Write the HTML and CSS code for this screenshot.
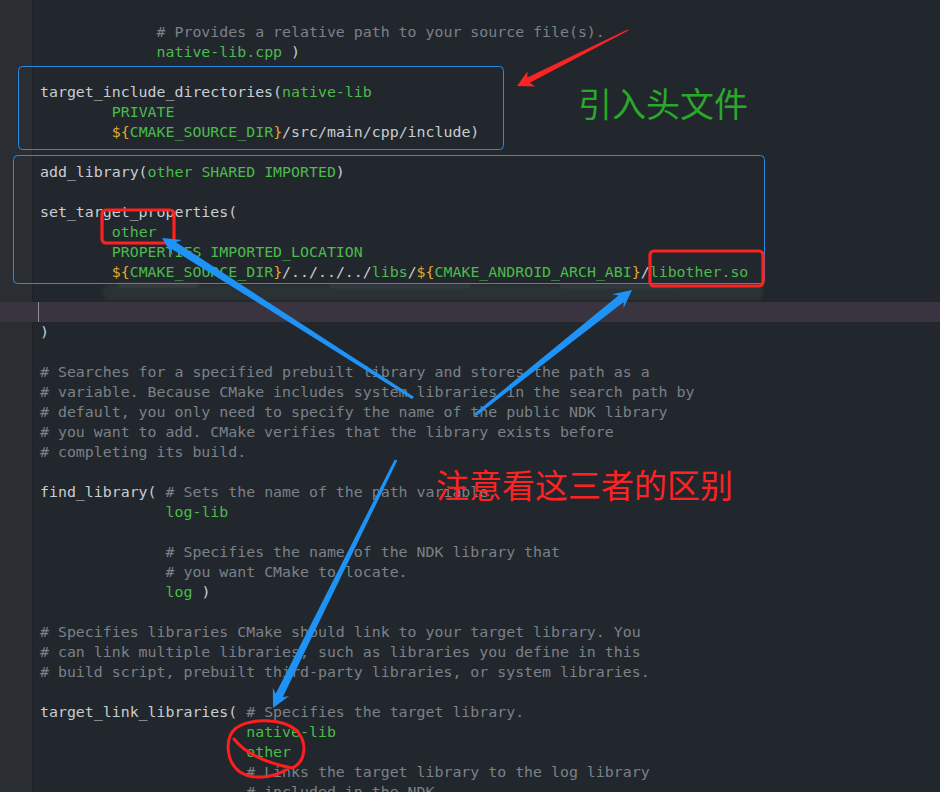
FILE: index.html
```html
<!DOCTYPE html>
<html lang="en">
<head>
  <meta charset="UTF-8">
  <title>CMakeLists.txt</title>
  <link rel="stylesheet" href="styles.css">
</head>
<body>
  <div class="editor">
    <div class="ln">             <span class="cm"># Provides a relative path to your source file(s).</span></div>
    <div class="ln">             <span class="g">native-lib.cpp</span> )</div>
    <div class="ln"> </div>
    <div class="ln">target_include_directories(<span class="g">native-lib</span></div>
    <div class="ln">        <span class="g">PRIVATE</span></div>
    <div class="ln">        <span class="y">${</span><span class="g">CMAKE_SOURCE_DIR</span><span class="y">}</span>/src/main/cpp/include)</div>
    <div class="ln"> </div>
    <div class="ln">add_library(<span class="g">other SHARED IMPORTED</span>)</div>
    <div class="ln"> </div>
    <div class="ln">set_target_properties(</div>
    <div class="ln">        <span class="g">other</span></div>
    <div class="ln">        <span class="g">PROPERTIES IMPORTED_LOCATION</span></div>
    <div class="ln">        <span class="y">${</span><span class="g">CMAKE_SOURCE_DIR</span><span class="y">}</span>/../../../<span class="g">libs</span>/<span class="y">${</span><span class="g">CMAKE_ANDROID_ARCH_ABI</span><span class="y">}</span>/<span class="g">libother.so</span></div>
    <div class="ln"> </div>
    <div class="ln current"><span class="caret"></span></div>
    <div class="ln">)</div>
    <div class="ln"> </div>
    <div class="ln cm"># Searches for a specified prebuilt library and stores the path as a</div>
    <div class="ln cm"># variable. Because CMake includes system libraries in the search path by</div>
    <div class="ln cm"># default, you only need to specify the name of the public NDK library</div>
    <div class="ln cm"># you want to add. CMake verifies that the library exists before</div>
    <div class="ln cm"># completing its build.</div>
    <div class="ln"> </div>
    <div class="ln">find_library( <span class="cm"># Sets the name of the path variable.</span></div>
    <div class="ln">              <span class="g">log-lib</span></div>
    <div class="ln"> </div>
    <div class="ln">              <span class="cm"># Specifies the name of the NDK library that</span></div>
    <div class="ln">              <span class="cm"># you want CMake to locate.</span></div>
    <div class="ln">              <span class="g">log</span> )</div>
    <div class="ln"> </div>
    <div class="ln cm"># Specifies libraries CMake should link to your target library. You</div>
    <div class="ln cm"># can link multiple libraries, such as libraries you define in this</div>
    <div class="ln cm"># build script, prebuilt third-party libraries, or system libraries.</div>
    <div class="ln"> </div>
    <div class="ln">target_link_libraries( <span class="cm"># Specifies the target library.</span></div>
    <div class="ln">                       <span class="g">native-lib</span></div>
    <div class="ln">                       <span class="g">other</span></div>
    <div class="ln">                       <span class="cm"># Links the target library to the log library</span></div>
    <div class="ln">                       <span class="cm"># included in the NDK.</span></div>
  </div>

  <!-- annotation layer drawn over the screenshot -->
  <svg class="marks" width="940" height="792" viewBox="0 0 940 792">
    <defs>
      <filter id="soft"><feGaussianBlur stdDeviation="1.5"/></filter>
    </defs>
    <g filter="url(#soft)" fill="#2c3135">
      <rect x="103" y="285" width="660" height="15" rx="7"/>
      <rect x="118" y="283" width="80" height="4" fill="#383d42"/>
      <rect x="330" y="284" width="140" height="4" fill="#343a3f"/>
      <rect x="560" y="284" width="120" height="4" fill="#343a3f"/>
    </g>

    <rect class="box-blue" x="18.5" y="66.5" width="485" height="83" rx="4"/>
    <rect class="box-blue" x="13.5" y="155.5" width="751" height="128" rx="4"/>

    <rect class="box-red" x="102" y="210" width="72" height="33" rx="4"/>
    <rect class="box-red" x="650" y="251" width="113" height="35" rx="4"/>

    <polygon class="arrow-red" points="628.4,30.6 529.9,82.7 535.1,86.4 517,86 527.5,71.2 527.3,77.5 627.6,29.4"/>

    <polygon class="arrow-blue" points="413.8,396.8 176.0,242.2 182.0,240.1 162,238 172.4,255.3 171.6,248.9 412.2,399.2"/>
    <polygon class="arrow-blue" points="475.9,416.2 623.7,301.9 623.5,308.2 632,290 612.3,294.2 618.5,295.6 474.1,413.8"/>
    <polygon class="arrow-blue" points="397.3,460.6 282.7,697.2 289.1,695.9 273,708 272.9,687.9 275.7,693.8 394.7,459.4"/>

    <path class="loop-red" d="M234 739 C244 752 262 762 292 768 C306 762 308 742 296 730 C282 718 250 718 236 728 C224 738 226 762 240 772 C252 780 272 778 286 770"/>
  </svg>

  <div class="note note-green">引入头文件</div>
  <div class="note note-red">注意看这三者的区别</div>
</body>
</html>
```

FILE: styles.css
```css
html, body {
  margin: 0;
  height: 100%;
}
body {
  width: 940px;
  height: 792px;
  overflow: hidden;
  position: relative;
  background: #22272d;
}
.editor {
  height: 100%;
  padding-top: 22px;
  box-sizing: border-box;
  background: linear-gradient(to right, #2a2e32 0, #2a2e32 32px, #1f2327 32px, #1f2327 33px, #22272d 33px);
  font-family: "DejaVu Sans Mono", "Liberation Mono", monospace;
  font-size: 14.9px;
  color: #c9cdd1;
}
.ln {
  height: 20px;
  line-height: 20px;
  padding-left: 40px;
  white-space: pre;
}
.ln.current {
  background: #393440;
  position: relative;
}
.caret {
  position: absolute;
  left: 38px;
  top: 0;
  width: 1px;
  height: 20px;
  background: #8c9096;
}
.cm {
  color: #7b8188;
}
.g {
  color: #4bbb4b;
}
.y {
  color: #e2a92c;
}
.marks {
  position: absolute;
  left: 0;
  top: 0;
}
.box-blue {
  fill: none;
  stroke: #2b8be0;
  stroke-width: 1;
}
.box-red {
  fill: none;
  stroke: #ff2020;
  stroke-width: 3.2;
}
.arrow-red {
  fill: #fa2424;
}
.arrow-blue {
  fill: #1f93f5;
}
.loop-red {
  fill: none;
  stroke: #ff1e1e;
  stroke-width: 3;
  stroke-linecap: round;
  stroke-linejoin: round;
}
.note {
  position: absolute;
  font-family: "Noto Sans CJK SC", "Noto Sans", sans-serif;
  line-height: 1;
  white-space: nowrap;
}
.note-green {
  left: 578px;
  top: 86px;
  font-size: 34px;
  color: #2aa82a;
}
.note-red {
  left: 436px;
  top: 468px;
  font-size: 33px;
  color: #ff2222;
}
```
